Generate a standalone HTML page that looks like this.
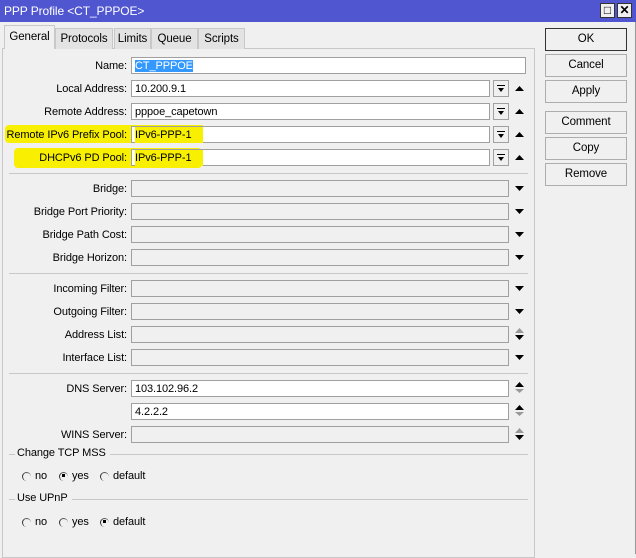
<!DOCTYPE html>
<html><head><style>
*{margin:0;padding:0;box-sizing:border-box}
body{width:636px;height:554px;background:#f0f0f0;font-family:"Liberation Sans",sans-serif;font-size:11px;letter-spacing:-0.1px;color:#000;position:relative;overflow:hidden}
.a{position:absolute}
.t{position:absolute;left:0;top:0;width:636px;height:22px;background:#5056d0;color:#fff;font-size:12px;padding:4px 0 0 4px}
.wb{position:absolute;top:3px;width:15px;height:15px;background:#f0f0f0;border:1px solid #333;color:#000;font-size:12px;line-height:13px;text-align:center;font-weight:bold}
.tab{position:absolute;top:28px;height:21px;border:1px solid #c8c8c8;border-bottom:none;background:#e3e3e3;padding:4px 0 0;text-align:center;font-size:11.5px}
.lb{position:absolute;right:509px;white-space:nowrap;text-align:right;margin-top:1px}
.f{position:absolute;left:131px;height:17px;border:1px solid #a0a0a0;background:#fff;padding:1px 3px;font-size:11px;line-height:14px}
.g{background:#f0f0f0}
.dd{position:absolute;left:493px;width:16px;height:17px;border:1px solid #a0a0a0;background:#f0f0f0}
.sep{position:absolute;left:9px;width:519px;height:1px;background:#c8c8c8}
.btn{position:absolute;left:545px;width:82px;border:1px solid #adadad;background:#f0f0f0;text-align:center;font-size:11.5px}
.hl{background:#f8f000}
svg{position:absolute}
.r{position:absolute;width:9px;height:9px;border-radius:50%;border-left:1.5px solid #333;border-top:1.5px solid #555}
.rt{position:absolute;margin-top:1px}
</style></head><body>
<div class="t">PPP Profile &lt;CT_PPPOE&gt;</div>
<div class="wb" style="left:600px">□</div><div class="wb" style="left:617px">✕</div>
<div class="a" style="left:2px;top:48px;width:533px;height:510px;border:1px solid #c8c8c8"></div>
<div class="a" style="left:635px;top:22px;width:1px;height:532px;background:#999"></div>
<div class="tab" style="left:55px;width:58px">Protocols</div>
<div class="tab" style="left:114px;width:37px">Limits</div>
<div class="tab" style="left:151px;width:47px">Queue</div>
<div class="tab" style="left:198px;width:47px">Scripts</div>
<div class="tab" style="left:4px;top:25px;width:51px;height:24px;background:#f0f0f0;padding-top:5px">General</div>

<div class="btn" style="top:28px;height:23px;border-color:#333;line-height:21px">OK</div>
<div class="btn" style="top:54px;height:23px;line-height:21px">Cancel</div>
<div class="btn" style="top:80px;height:23px;line-height:21px">Apply</div>
<div class="btn" style="top:111px;height:23px;line-height:21px">Comment</div>
<div class="btn" style="top:137px;height:23px;line-height:21px">Copy</div>
<div class="btn" style="top:163px;height:23px;line-height:21px">Remove</div>

<div class="a hl" style="left:5px;top:125px;width:200px;height:18px;border-radius:4px"></div>
<div class="a hl" style="left:14px;top:148px;width:188px;height:20px;border-radius:4px"></div>

<div class="lb" style="top:59px">Name:</div>
<div class="f" style="top:57px;width:395px"><span style="background:#3399ff;color:#fff">CT_PPPOE</span></div>
<div class="lb" style="top:82px">Local Address:</div><div class="f" style="top:80px;width:359px">10.200.9.1</div>
<div class="lb" style="top:105px">Remote Address:</div><div class="f" style="top:103px;width:359px">pppoe_capetown</div>
<div class="lb" style="top:128px">Remote IPv6 Prefix Pool:</div><div class="f" style="top:126px;width:359px"><span class="hl" style="padding:2px 12px 2px 0">IPv6-PPP-1</span></div>
<div class="lb" style="top:151px">DHCPv6 PD Pool:</div><div class="f" style="top:149px;width:359px"><span class="hl" style="padding:2px 12px 2px 0">IPv6-PPP-1</span></div>
<div class="dd" style="top:80px"></div><div class="dd" style="top:103px"></div><div class="dd" style="top:126px"></div><div class="dd" style="top:149px"></div>
<svg width="636" height="554" style="left:0;top:0">
<g fill="#000">
<path d="M497 85h8v1h-8zM498 88h6l-3 4z"/><path d="M497 108h8v1h-8zM498 111h6l-3 4z"/><path d="M497 131h8v1h-8zM498 134h6l-3 4z"/><path d="M497 154h8v1h-8zM498 157h6l-3 4z"/>
<path d="M515 91h9l-4.5-5z"/><path d="M515 114h9l-4.5-5z"/><path d="M515 137h9l-4.5-5z"/><path d="M515 160h9l-4.5-5z"/>
<path d="M515 186h9l-4.5 5z"/><path d="M515 209h9l-4.5 5z"/><path d="M515 232h9l-4.5 5z"/><path d="M515 255h9l-4.5 5z"/>
<path d="M515 286h9l-4.5 5z"/><path d="M515 309h9l-4.5 5z"/><path d="M515 335h9l-4.5 5z"/><path d="M515 355h9l-4.5 5z"/>
<path d="M515 387h9l-4.5-5z"/><path d="M515 410h9l-4.5-5z"/><path d="M515 435h9l-4.5 5z"/>
</g>
<g fill="#999"><path d="M515 333h9l-4.5-5z"/><path d="M515 389h9l-4.5 4z"/><path d="M515 412h9l-4.5 4z"/><path d="M515 433h9l-4.5-5z"/></g>
</svg>
<div class="sep" style="top:173px"></div>
<div class="lb" style="top:182px">Bridge:</div><div class="f g" style="top:180px;width:378px"></div>
<div class="lb" style="top:205px">Bridge Port Priority:</div><div class="f g" style="top:203px;width:378px"></div>
<div class="lb" style="top:228px">Bridge Path Cost:</div><div class="f g" style="top:226px;width:378px"></div>
<div class="lb" style="top:251px">Bridge Horizon:</div><div class="f g" style="top:249px;width:378px"></div>
<div class="sep" style="top:273px"></div>
<div class="lb" style="top:282px">Incoming Filter:</div><div class="f g" style="top:280px;width:378px"></div>
<div class="lb" style="top:305px">Outgoing Filter:</div><div class="f g" style="top:303px;width:378px"></div>
<div class="lb" style="top:328px">Address List:</div><div class="f g" style="top:326px;width:378px"></div>
<div class="lb" style="top:351px">Interface List:</div><div class="f g" style="top:349px;width:378px"></div>
<div class="sep" style="top:373px"></div>
<div class="lb" style="top:382px">DNS Server:</div><div class="f" style="top:380px;width:378px">103.102.96.2</div>
<div class="f" style="top:403px;width:378px">4.2.2.2</div>
<div class="lb" style="top:428px">WINS Server:</div><div class="f g" style="top:426px;width:378px"></div>
<div class="a" style="left:9px;top:454px;width:519px;height:1px;background:#c8c8c8"></div>
<div class="a" style="left:15px;top:447px;background:#f0f0f0;padding:0 4px 0 2px">Change TCP MSS</div>
<div class="a" style="left:9px;top:499px;width:519px;height:1px;background:#c8c8c8"></div>
<div class="a" style="left:15px;top:492px;background:#f0f0f0;padding:0 4px 0 2px">Use UPnP</div>
<div class="r" style="left:22px;top:472px"></div><div class="rt" style="left:35px;top:469px">no</div>
<div class="r" style="left:59px;top:472px"></div><div class="a" style="left:62px;top:474px;width:3px;height:3px;background:#000"></div><div class="rt" style="left:72px;top:469px">yes</div>
<div class="r" style="left:100px;top:472px"></div><div class="rt" style="left:113px;top:469px">default</div>
<div class="r" style="left:22px;top:518px"></div><div class="rt" style="left:35px;top:515px">no</div>
<div class="r" style="left:59px;top:518px"></div><div class="rt" style="left:72px;top:515px">yes</div>
<div class="r" style="left:100px;top:518px"></div><div class="a" style="left:103px;top:520px;width:3px;height:3px;background:#000"></div><div class="rt" style="left:113px;top:515px">default</div>
</body></html>
